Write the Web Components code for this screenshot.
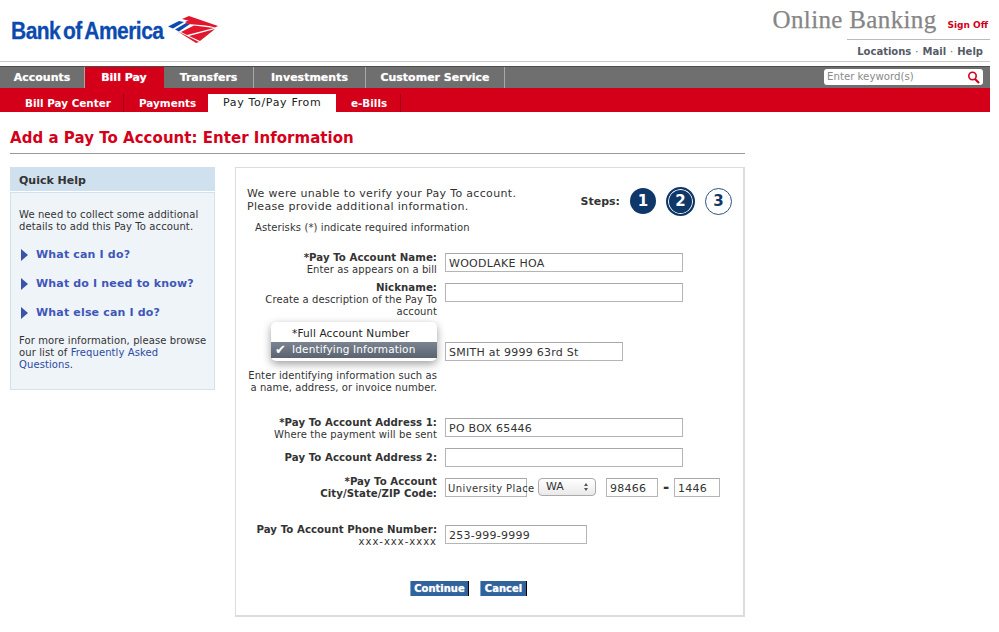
<!DOCTYPE html>
<html lang="en">
<head>
<meta charset="utf-8">
<title>Add a Pay To Account</title>
<style>
    body {
        margin: 0;
        background: #fff;
        font: 10px/12px "DejaVu Sans", Verdana, sans-serif;
        color: #333;
    }
</style>
</head>
<body>
<bank-page></bank-page>

<script>
class BankHeader extends HTMLElement {
    constructor () {
        super()
        this.root = this.attachShadow({mode: "open"})
    }

    connectedCallback () {
        this.root.innerHTML =
        `
        <style>
            :host { display: flex; justify-content: space-between; width: 990px; height: 66px; position: relative; }
            .logo { display: flex; align-items: flex-start; padding: 16px 0 0 11px; }
            .word {
                font: bold 24px/30px "Liberation Sans", Arial, sans-serif;
                color: #0b4bb0;
                letter-spacing: -0.6px;
                width: 157px;
                white-space: nowrap;
                transform: scaleX(.875);
                transform-origin: left center;
                -webkit-text-stroke: .3px #0b4bb0;
            }
            .word span { margin-left: 3px; }
            svg.flag { display: block; }
            .right { display: flex; flex-direction: column; align-items: flex-end; }
            .top { display: flex; align-items: baseline; height: 39px; padding-top: 8px; box-sizing: border-box; white-space: nowrap; }
            .brand { font: 25px/24px "Liberation Serif", Georgia, serif; letter-spacing: .35px; color: #868686; -webkit-text-stroke: .25px #868686; }
            .off { font: bold 9px/12px "DejaVu Sans", sans-serif; color: #d4001a; margin: 0 2px 0 11px; }
            .short { width: 143px; height: 1px; background: #bbb; }
            .links { font-weight: bold; color: #555b66; font-size: 10px; line-height: 12px; margin: 6px 7px 0 0; white-space: nowrap; }
            .links span { margin: 0 4px; font-weight: normal; }
            .rule { position: absolute; left: 0; right: 0; top: 61px; height: 1px; background: #c9c9c9; }
        </style>
        <div class="logo">
            <div class="word">Bank<span>of</span><span>America</span></div>
            <svg class="flag" width="50" height="27" viewBox="0 0 50 27">
                <g fill="#0b4bb0">
                    <polygon points="0,10.5 11,5 16,6 5,12.5"/>
                    <polygon points="7,13.5 18,7 22,8 11,15.5"/>
                </g>
                <g fill="#e1162d">
                    <polygon points="14,3 21,0 50,10 47,11.5"/>
                    <polygon points="20,8 17,6 24,3 44,10"/>
                    <polygon points="13,16 26,9.5 46,12 19,19"/>
                    <polygon points="9,15 13,17 31,26 28,27"/>
                    <polygon points="21,20 47,13 32,25"/>
                </g>
            </svg>
        </div>
        <div class="right">
            <div class="top"><span class="brand">Online Banking</span><span class="off">Sign Off</span></div>
            <div class="short"></div>
            <div class="links">Locations<span>·</span>Mail<span>·</span>Help</div>
        </div>
        <div class="rule"></div>
        `
    }
}

class MainNav extends HTMLElement {
    constructor () {
        super()
        this.root = this.attachShadow({mode: "open"})
    }

    connectedCallback () {
        const tabs = [["Accounts", 85], ["Bill Pay", 79, true], ["Transfers", 90], ["Investments", 112], ["Customer Service", 139]]
        this.root.innerHTML =
        `
        <style>
            :host { display: flex; width: 990px; height: 22px; background: #6f6f6f; border-top: 1px solid #4c4c4c; box-sizing: border-box; justify-content: space-between; }
            .tabs { display: flex; }
            .tab { box-sizing: border-box; border-right: 1px solid #a8a8a8; color: #fff; font-weight: bold; font-size: 11px; line-height: 21px; text-align: center; white-space: nowrap; text-shadow: 0 0 1px rgba(255,255,255,.6); }
            .tab.on { background: #d4001a; border-color: #d4001a; }
            .search { display: flex; align-items: center; justify-content: space-between; box-sizing: border-box; width: 159px; height: 16px; margin: 2px 7px 0 0; padding: 0 3px; background: #fff; border-radius: 3px; color: #8a8a8a; font-size: 10.2px; }
        </style>
        <div class="tabs">
            ${tabs.map(t => `<div class="tab ${t[2] ? "on" : ""}" style="width:${t[1]}px">${t[0]}</div>`).join("")}
        </div>
        <div class="search">
            <span>Enter keyword(s)</span>
            <svg width="13" height="13" viewBox="0 0 13 13"><circle cx="5.5" cy="5" r="3.7" fill="none" stroke="#d4001a" stroke-width="1.6"/><path d="M8 8 L12 12" stroke="#d4001a" stroke-width="2.2"/></svg>
        </div>
        `
    }
}

class SubNav extends HTMLElement {
    constructor () {
        super()
        this.root = this.attachShadow({mode: "open"})
    }

    connectedCallback () {
        this.root.innerHTML =
        `
        <style>
            :host { display: flex; align-items: flex-end; width: 990px; height: 24px; background: #d4001a; box-sizing: border-box; }
            div { height: 18px; box-sizing: border-box; line-height: 18px; color: #fff; font-size: 10.4px; font-weight: bold; white-space: nowrap; border-right: 1px solid #a40014; }
            .on { background: #fff; color: #222; font-weight: normal; font-size: 11px; letter-spacing: .67px; border: 0; }
        </style>
        <div style="width:124px; padding-left:25px">Bill Pay Center</div>
        <div style="width:84px; padding-left:15px; border: 0">Payments</div>
        <div class="on" style="width:128px; padding-left:15px">Pay To/Pay From</div>
        <div style="width:65px; padding-left:15px">e-Bills</div>
        `
    }
}

class QuickHelp extends HTMLElement {
    constructor () {
        super()
        this.root = this.attachShadow({mode: "open"})
    }

    connectedCallback () {
        const links = ["What can I do?", "What do I need to know?", "What else can I do?"]
        this.root.innerHTML =
        `
        <style>
            :host { display: block; width: 205px; font-size: 10px; letter-spacing: .1px; }
            h3 { margin: 0; height: 24px; background: #cfe0ee; font-size: 11px; line-height: 28px; padding-left: 9px; color: #333; letter-spacing: 0; }
            .body { margin-top: 1px; height: 198px; box-sizing: border-box; padding: 16px 3px 0 8px; background: #eff4f9; border: 1px solid #d3e1ee; color: #333; }
            p { margin: 0; }
            ul { list-style: none; margin: 15px 0 15px; padding: 0; }
            li { display: flex; align-items: center; height: 14px; margin-bottom: 15px; font-size: 11px; letter-spacing: .17px; font-weight: bold; color: #3f57b8; padding-left: 2px; }
            li:last-child { margin-bottom: 0; }
            li::before { content: ""; width: 0; height: 0; border-left: 7px solid #3a55a8; border-top: 6.5px solid transparent; border-bottom: 6.5px solid transparent; margin-right: 8px; }
            a { color: #2c4ba0; text-decoration: none; }
        </style>
        <h3>Quick Help</h3>
        <div class="body">
            <p>We need to collect some additional details to add this Pay To account.</p>
            <ul>${links.map(l => `<li>${l}</li>`).join("")}</ul>
            <p>For more information, please browse our list of <a>Frequently Asked Questions</a>.</p>
        </div>
        `
    }
}

class StepBadge extends HTMLElement {
    constructor () {
        super()
        this.root = this.attachShadow({mode: "open"})
    }

    connectedCallback () {
        const kind = this.getAttribute("kind")
        this.root.innerHTML =
        `
        <style>
            :host { display: block; }
            div { box-sizing: border-box; width: 26px; height: 26px; border-radius: 50%; display: flex; align-items: center; justify-content: center; font: bold 15px/1 "DejaVu Sans", sans-serif; }
            .done { background: #0f3768; color: #fff; }
            .now { width: 29px; height: 29px; background: #0f3768; color: #fff; border: 2px solid #0f3768; box-shadow: inset 0 0 0 1px #fff; }
            .next { width: 27px; height: 27px; background: #fff; color: #0f3768; border: 1.5px solid #2a5386; }
        </style>
        <div class="${kind}">${this.getAttribute("n")}</div>
        `
    }
}

class FormRow extends HTMLElement {
    constructor () {
        super()
        this.root = this.attachShadow({mode: "open"})
    }

    connectedCallback () {
        const pad = Number(this.getAttribute("label-top") || 0) + 1
        const fieldTop = this.getAttribute("field-top") || 2
        this.root.innerHTML =
        `
        <style>
            :host { display: grid; grid-template-columns: 186px 1fr; column-gap: 8px; padding-left: 15px; position: relative; }
            .label { text-align: right; padding-top: ${pad}px; font-size: 10px; letter-spacing: .1px; line-height: 12px; color: #333; }
            ::slotted(b) { font-size: 10.2px; letter-spacing: .05px; }
            .fields { display: flex; align-items: flex-start; padding-top: ${fieldTop}px; }
        </style>
        <div class="label"><slot></slot></div>
        <div class="fields"><slot name="field"></slot></div>
        `
    }
}

class TextField extends HTMLElement {
    constructor () {
        super()
        this.root = this.attachShadow({mode: "open"})
    }

    connectedCallback () {
        const small = this.hasAttribute("small")
        this.root.innerHTML =
        `
        <style>
            :host { display: block; flex: none; box-sizing: border-box; height: 19px; border: 1px solid #b5b5b5; border-top-color: #a8a8a8; background: #fff; padding: 2px 0 0 ${small ? 2 : 3}px; font-size: ${small ? 10 : 11}px; letter-spacing: ${small ? .4 : .25}px; line-height: 15px; color: #333; white-space: nowrap; }
        </style>
        <slot></slot>
        `
    }
}

class ActionButton extends HTMLElement {
    constructor () {
        super()
        this.root = this.attachShadow({mode: "open"})
    }

    connectedCallback () {
        this.root.innerHTML =
        `
        <style>
            :host { display: block; box-sizing: border-box; height: 15px; border-left: 1px solid #7fa3cc; border-right: 1px solid #000; background: #30639c; background-clip: padding-box; color: #fff; font-weight: bold; font-size: 10px; line-height: 15px; text-align: center; text-shadow: 0 0 1px rgba(255,255,255,.7); }
        </style>
        <slot></slot>
        `
    }
}

class ChoiceMenu extends HTMLElement {
    constructor () {
        super()
        this.root = this.attachShadow({mode: "open"})
    }

    connectedCallback () {
        this.root.innerHTML =
        `
        <style>
            :host { position: absolute; left: 35px; top: -18px; width: 166px; height: 39px; box-sizing: border-box; padding-top: 4px; background: #fff; border-radius: 5px; box-shadow: 0 3px 9px rgba(0,0,0,.38); font-size: 10.5px; letter-spacing: .15px; color: #222; }
            div { height: 16px; line-height: 14px; padding-left: 21px; }
            .on { position: relative; background: linear-gradient(#7b8490, #5a6370); color: #fff; }
            .on span { position: absolute; left: 4px; top: 1px; font-size: 13px; }
        </style>
        <div>*Full Account Number</div>
        <div class="on"><span>✔</span>Identifying Information</div>
        `
    }
}

class PayForm extends HTMLElement {
    constructor () {
        super()
        this.root = this.attachShadow({mode: "open"})
    }

    connectedCallback () {
        this.root.innerHTML =
        `
        <style>
            :host { display: block; box-sizing: border-box; width: 510px; height: 450px; border: 1px solid #dcdcdc; border-width: 1px 2px 2px 1px; padding-top: 19px; position: relative; }
            .head { display: flex; justify-content: space-between; padding: 0 11px 0 11px; height: 27px; }
            .intro { font-size: 11px; letter-spacing: .33px; line-height: 13px; }
            .steps { display: flex; align-items: center; gap: 10px; margin-top: -1px; height: 30px; font-weight: bold; font-size: 11px; }
            .steps span { padding-top: 2px; }
            .note { margin: 7px 0 0 19px; height: 15px; font-size: 10px; letter-spacing: .1px; line-height: 14px; }
            .state { flex: none; box-sizing: border-box; width: 58px; height: 18px; margin: 0 10px 0 11px; border: 1px solid #aaa; border-radius: 4px; background: linear-gradient(#fff, #e9e9e9); display: flex; justify-content: space-between; align-items: center; padding: 0 7px; font-size: 11px; }
            .arrows { display: flex; flex-direction: column; gap: 2px; }
            .arrows i { width: 0; height: 0; border-left: 2.5px solid transparent; border-right: 2.5px solid transparent; }
            .arrows i:first-child { border-bottom: 3px solid #555; }
            .arrows i:last-child { border-top: 3px solid #555; }
            .dash { width: 16px; text-align: center; font-weight: bold; font-size: 15px; line-height: 19px; flex: none; }
            .wide { display: block; margin-left: -4px; }
            .mask { letter-spacing: 1px; }
            .buttons { display: flex; gap: 11px; margin: 34px 0 0 174px; }
            form-row.r1 { margin-top: 15px; height: 24px; }
            form-row.r2 { margin-top: 6px; height: 36px; }
            form-row.r3 { margin-top: 23px; height: 53px; }
            form-row.r4 { margin-top: 23px; height: 24px; }
            form-row.r5 { margin-top: 6px; height: 21px; }
            form-row.r6 { margin-top: 8px; height: 24px; }
            form-row.r7 { margin-top: 24px; height: 24px; }
        </style>
        <div class="head">
            <div class="intro">We were unable to verify your Pay To account.<br>Please provide additional information.</div>
            <div class="steps">
                <span>Steps:</span>
                <step-badge n="1" kind="done"></step-badge>
                <step-badge n="2" kind="now"></step-badge>
                <step-badge n="3" kind="next"></step-badge>
            </div>
        </div>
        <div class="note">Asterisks (*) indicate required information</div>

        <form-row class="r1"><b>*Pay To Account Name:</b><br>Enter as appears on a bill
            <text-field slot="field" style="width:238px">WOODLAKE HOA</text-field></form-row>
        <form-row class="r2"><b>Nickname:</b><br>Create a description of the Pay To account
            <text-field slot="field" style="width:238px"></text-field></form-row>
        <form-row class="r3" label-top="29"><span class="wide">Enter identifying information such as a name, address, or invoice number.</span>
            <text-field slot="field" style="width:178px">SMITH at 9999 63rd St</text-field>
            <choice-menu slot="field"></choice-menu></form-row>
        <form-row class="r4"><b>*Pay To Account Address 1:</b><br>Where the payment will be sent
            <text-field slot="field" style="width:238px">PO BOX 65446</text-field></form-row>
        <form-row class="r5" label-top="5"><b>Pay To Account Address 2:</b>
            <text-field slot="field" style="width:238px"></text-field></form-row>
        <form-row class="r6" field-top="3"><b>*Pay To Account<br>City/State/ZIP Code:</b>
            <text-field slot="field" small style="width:82px">University Place</text-field>
            <div slot="field" class="state">WA<span class="arrows"><i></i><i></i></span></div>
            <text-field slot="field" style="width:52px">98466</text-field>
            <div slot="field" class="dash">-</div>
            <text-field slot="field" style="width:46px">1446</text-field></form-row>
        <form-row class="r7"><b>Pay To Account Phone Number:</b><br><span class="mask">xxx-xxx-xxxx</span>
            <text-field slot="field" style="width:142px">253-999-9999</text-field></form-row>

        <div class="buttons">
            <action-button style="width:59px">Continue</action-button>
            <action-button style="width:47px">Cancel</action-button>
        </div>
        `
    }
}

class BankPage extends HTMLElement {
    constructor () {
        super()
        this.root = this.attachShadow({mode: "open"})
    }

    connectedCallback () {
        this.root.innerHTML =
        `
        <style>
            :host { display: block; width: 999px; }
            h1 { margin: 18px 0 0 10px; width: 735px; height: 24px; box-sizing: border-box; border-bottom: 1px solid #999; color: #d4001a; font-size: 15px; letter-spacing: .03px; line-height: 17px; white-space: nowrap; }
            .main { display: grid; grid-template-columns: 205px 510px; column-gap: 20px; padding: 13px 0 0 10px; }
        </style>
        <bank-header></bank-header>
        <main-nav></main-nav>
        <sub-nav></sub-nav>
        <h1>Add a Pay To Account: Enter Information</h1>
        <div class="main">
            <quick-help></quick-help>
            <pay-form></pay-form>
        </div>
        `
    }
}

customElements.define("bank-header", BankHeader)
customElements.define("main-nav", MainNav)
customElements.define("sub-nav", SubNav)
customElements.define("quick-help", QuickHelp)
customElements.define("step-badge", StepBadge)
customElements.define("form-row", FormRow)
customElements.define("text-field", TextField)
customElements.define("action-button", ActionButton)
customElements.define("choice-menu", ChoiceMenu)
customElements.define("pay-form", PayForm)
customElements.define("bank-page", BankPage)
</script>
</body>
</html>
